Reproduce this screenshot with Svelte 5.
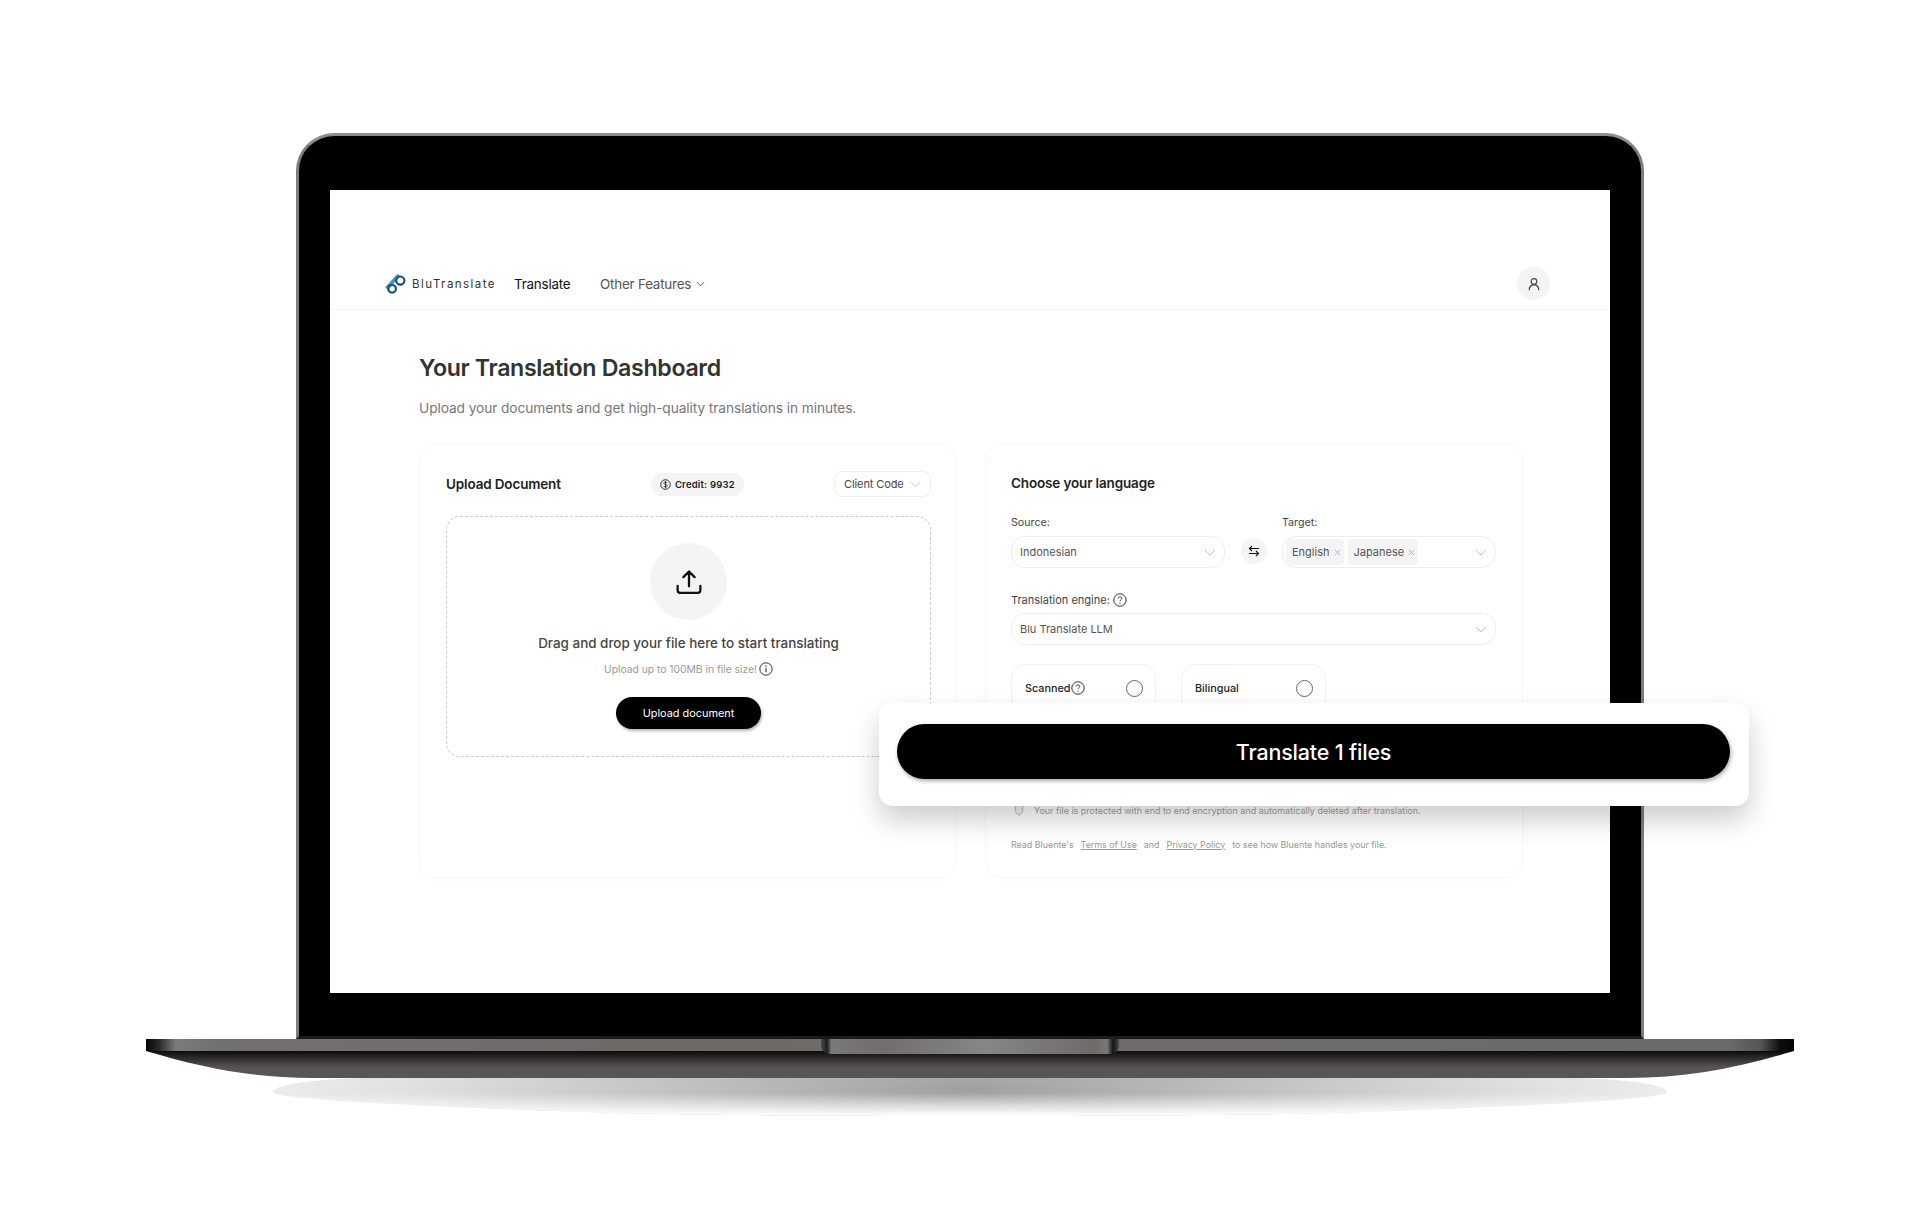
<script>
  const tags = ['English', 'Japanese'];
</script>

<div class="page">
  <div class="laptop">
    <div class="bezel">
      <div class="screen">
        <header class="nav">
          <svg class="logo" viewBox="0 0 21 20" width="22" height="20" aria-hidden="true">
            <path d="M1 14.500 L13.500 1" stroke="#3f93c6" stroke-width="3.800" fill="none"/>
            <circle cx="14.800" cy="6.600" r="4.100" fill="none" stroke="#1d4f7c" stroke-width="2.200"/>
            <circle cx="6.600" cy="14.800" r="3.800" fill="none" stroke="#1d4f7c" stroke-width="2.200"/>
          </svg>
          <span class="brand">BluTranslate</span>
          <span class="navlink active">Translate</span>
          <span class="navlink">Other Features</span>
          <svg class="navchev" viewBox="0 0 10 6" width="9" height="6" aria-hidden="true"><path d="M1 1l4 4 4-4" fill="none" stroke="#555" stroke-width="1"/></svg>
          <div class="avatar">
            <svg viewBox="0 0 16 16" width="14" height="14" aria-hidden="true"><circle cx="8" cy="5" r="3.200" fill="none" stroke="#444" stroke-width="1.300"/><path d="M2.500 15c0-3.600 2-6 5.500-6s5.500 2.400 5.500 6" fill="none" stroke="#444" stroke-width="1.300"/></svg>
          </div>
        </header>

        <main class="main">
          <h1>Your Translation Dashboard</h1>
          <p class="sub">Upload your documents and get high-quality translations in minutes.</p>

          <div class="cards">
            <section class="card left">
              <div class="head">
                <h2>Upload Document</h2>
                <span class="credit">
                  <svg viewBox="0 0 12 12" width="11" height="11" aria-hidden="true"><circle cx="6" cy="6" r="5.200" fill="none" stroke="#222" stroke-width="1"/><path d="M7.800 4.300C7.500 3.500 6.800 3.200 6 3.200c-1 0-1.800.5-1.800 1.400 0 1.900 3.700.9 3.700 2.800 0 .9-.9 1.400-1.900 1.400-.9 0-1.700-.4-2-1.200M6 2v8" fill="none" stroke="#222" stroke-width=".9"/></svg>
                  Credit: 9932
                </span>
                <span class="client">Client Code
                  <svg viewBox="0 0 12 7" width="11" height="7" aria-hidden="true"><path d="M1 1l5 5 5-5" fill="none" stroke="#c4c4c4" stroke-width="1"/></svg>
                </span>
              </div>

              <div class="drop">
                <div class="circle">
                  <svg viewBox="0 0 24 24" width="26" height="26" aria-hidden="true"><path d="M12 16V2.500M6.800 7.500 12 2.300l5.200 5.200M1.500 15.500v4.200c0 1.300 1 2.300 2.300 2.300h16.400c1.300 0 2.300-1 2.300-2.300v-4.200" fill="none" stroke="#111" stroke-width="2.100" stroke-linecap="round" stroke-linejoin="round"/></svg>
                </div>
                <p class="dragline">Drag and drop your file here to start translating</p>
                <p class="limit">Upload up to 100MB in file size!
                  <svg viewBox="0 0 14 14" width="14" height="14" aria-hidden="true"><circle cx="7" cy="7" r="6.200" fill="none" stroke="#333" stroke-width="1"/><path d="M7 6.200v4M7 3.600v1.200" stroke="#333" stroke-width="1.200" fill="none"/></svg>
                </p>
                <button class="upload" type="button">Upload document</button>
              </div>
            </section>

            <section class="card right">
              <h2 class="lang">Choose your language</h2>
              <div class="langrow">
                <div class="field">
                  <span class="label">Source:</span>
                  <div class="select">
                    <span>Indonesian</span>
                    <svg viewBox="0 0 12 7" width="12" height="7" aria-hidden="true"><path d="M1 1l5 5 5-5" fill="none" stroke="#c4c4c4" stroke-width="1"/></svg>
                  </div>
                </div>
                <div class="swap">
                  <svg viewBox="0 0 12 12" width="12" height="12" aria-hidden="true"><path d="M11 3.500H1.500M4 1 1.500 3.500 4 6M1 8.500h9.500M8 6l2.500 2.500L8 11" fill="none" stroke="#111" stroke-width="1.100"/></svg>
                </div>
                <div class="field">
                  <span class="label">Target:</span>
                  <div class="select multi">
                    {#each tags as t}
                      <span class="tag">{t}<svg viewBox="0 0 8 8" width="7" height="7" aria-hidden="true"><path d="M1 1l6 6M7 1 1 7" stroke="#aaa" stroke-width="1"/></svg></span>
                    {/each}
                    <svg class="end" viewBox="0 0 12 7" width="12" height="7" aria-hidden="true"><path d="M1 1l5 5 5-5" fill="none" stroke="#c4c4c4" stroke-width="1"/></svg>
                  </div>
                </div>
              </div>

              <div class="engine-label">Translation engine:
                <svg viewBox="0 0 14 14" width="14" height="14" aria-hidden="true"><circle cx="7" cy="7" r="6.200" fill="none" stroke="#333" stroke-width="1"/><path d="M5.200 5.500c0-1 .8-1.700 1.800-1.700s1.800.7 1.800 1.600c0 1.300-1.800 1.400-1.800 2.700M7 9.600v1.200" fill="none" stroke="#333" stroke-width="1"/></svg>
              </div>
              <div class="select wide">
                <span>Blu Translate LLM</span>
                <svg viewBox="0 0 12 7" width="12" height="7" aria-hidden="true"><path d="M1 1l5 5 5-5" fill="none" stroke="#c4c4c4" stroke-width="1"/></svg>
              </div>

              <div class="toggles">
                <div class="toggle">
                  <span class="tlabel">Scanned
                    <svg viewBox="0 0 14 14" width="14" height="14" aria-hidden="true"><circle cx="7" cy="7" r="6.200" fill="none" stroke="#333" stroke-width="1"/><path d="M5.200 5.500c0-1 .8-1.700 1.800-1.700s1.800.7 1.800 1.600c0 1.300-1.800 1.400-1.800 2.700M7 9.600v1.200" fill="none" stroke="#333" stroke-width="1"/></svg>
                  </span>
                  <span class="radio"></span>
                </div>
                <div class="toggle">
                  <span class="tlabel">Bilingual</span>
                  <span class="radio"></span>
                </div>
              </div>

              <div class="secure">
                <svg viewBox="0 0 12 14" width="10" height="12" aria-hidden="true"><path d="M6 1 10.500 2.500v4.300c0 3-2 4.900-4.500 6.200-2.500-1.300-4.500-3.200-4.500-6.200V2.500z" fill="#f2f2f2" stroke="#aaa" stroke-width="1"/></svg>
                <span>Your file is protected with end to end encryption and automatically deleted after translation.</span>
              </div>
              <div class="legal">
                <span>Read Bluente's</span><u>Terms of Use</u><span>and</span><u>Privacy Policy</u><span>to see how Bluente handles your file.</span>
              </div>
            </section>
          </div>
        </main>

        <div class="float">
          <button class="translate" type="button">Translate 1 files</button>
        </div>
      </div>
    </div>

    <div class="strip"><div class="notch"></div></div>
    <svg class="base" viewBox="0 0 1648 27" width="1648" height="27" aria-hidden="true">
      <defs>
        <linearGradient id="baseg" x1="0" y1="0" x2="0" y2="1">
          <stop offset="0" stop-color="#0b0b0b"/>
          <stop offset=".25" stop-color="#2c2a2a"/>
          <stop offset=".6" stop-color="#575352"/>
          <stop offset="1" stop-color="#5a5654"/>
        </linearGradient>
      </defs>
      <path d="M0 0H1648C1591 17 1541 27 1481 27H167C107 27 57 17 0 0Z" fill="url(#baseg)"/>
    </svg>
    <svg class="shadow" viewBox="0 0 1394 39" width="1394" height="39" aria-hidden="true">
      <defs>
        <radialGradient id="shg" gradientUnits="userSpaceOnUse" cx="697" cy="12" r="697" gradientTransform="translate(0 10) scale(1 .15)">
          <stop offset="0" stop-color="#a0a0a0"/>
          <stop offset=".4" stop-color="#c0c0c0"/>
          <stop offset=".8" stop-color="#e0e0e0"/>
          <stop offset="1" stop-color="#ececec"/>
        </radialGradient>
        <linearGradient id="shf" x1="0" y1="0" x2="0" y2="1">
          <stop offset="0" stop-color="#fff" stop-opacity="0"/>
          <stop offset=".4" stop-color="#fff" stop-opacity="0"/>
          <stop offset="1" stop-color="#fff" stop-opacity="1"/>
        </linearGradient>
      </defs>
      <path d="M0 14C0 8 30 2 85 0H1309C1364 2 1394 8 1394 14C1394 20 1300 27 1060 35C900 39 500 39 340 35C100 27 0 20 0 14Z" fill="url(#shg)"/>
      <path d="M0 14C0 8 30 2 85 0H1309C1364 2 1394 8 1394 14C1394 20 1300 27 1060 35C900 39 500 39 340 35C100 27 0 20 0 14Z" fill="url(#shf)"/>
    </svg>
  </div>
</div>

<style>
  :global(*) { box-sizing: border-box; }
  :global(body) { margin: 0; background: #fff; font-family: Inter, "Liberation Sans", sans-serif; }

  .page { height: 1222px; padding: 133px 0 0 146px; overflow: hidden; }
  .laptop { width: 1648px; display: flex; flex-direction: column; }

  .bezel {
    width: 1348px;
    height: 906px;
    margin-left: 150px;
    padding: 54px 31px 43px 31px;
    background: #000;
    border: 3px solid #7c7c7c;
    border-top-color: #8e8e8e;
    border-bottom-color: #1b1b1b;
    border-radius: 38px 38px 0 0;
  }
  .screen { width: 1280px; height: 803px; background: #fff; position: relative; }

  .nav {
    height: 120px;
    padding: 77px 60px 9px 55px;
    display: flex;
    align-items: center;
    border-bottom: 1px solid #f6f6f6;
  }
  .logo { flex: none; }
  .brand { margin-left: 5px; font-size: 11.500px; letter-spacing: 1.450px; color: #333; width: 102px; }
  .navlink { font-size: 13.400px; color: #555; letter-spacing: -.2px; }
  .navlink.active { color: #111; width: 86px; }
  .navchev { margin-left: 5px; }
  .avatar {
    margin-left: auto;
    width: 33px;
    height: 33px;
    border-radius: 50%;
    background: #f4f4f5;
    display: flex;
    align-items: center;
    justify-content: center;
  }

  .main { padding: 43px 87px 0 89px; }
  h1 { margin: 0; font-size: 23.200px; line-height: 30px; font-weight: 600; color: #333; letter-spacing: -.35px; }
  .sub { margin: 15px 0 26px; font-size: 13.750px; line-height: 20px; color: #777; letter-spacing: -.1px; }

  .cards { display: flex; justify-content: space-between; }
  .card {
    height: 434px;
    border: 1px solid #f8f8f8;
    border-radius: 16px;
    background: #fff;
    box-shadow: 0 2px 8px rgba(0, 0, 0, .012);
  }
  .left { width: 537px; padding: 26px 24px 0 26px; }
  .right { width: 538px; padding: 29px 26px 0 25px; }

  .head { display: flex; align-items: center; justify-content: space-between; height: 26px; }
  h2 { margin: 0; font-size: 13.500px; line-height: 18px; font-weight: 600; color: #222; letter-spacing: -.15px; }
  .credit {
    display: flex;
    align-items: center;
    gap: 4px;
    width: 93px;
    height: 23px;
    padding-left: 9px;
    border-radius: 12px;
    background: #f4f4f6;
    font-size: 9.500px;
    font-weight: 600;
    color: #222;
    letter-spacing: .2px;
    white-space: nowrap;
  }
  .client {
    display: flex;
    align-items: center;
    justify-content: space-between;
    width: 97px;
    height: 26px;
    padding: 0 9px;
    border: 1px solid #eee;
    border-radius: 8px;
    font-size: 11px;
    color: #444;
    letter-spacing: -.1px;
    white-space: nowrap;
  }

  .drop {
    margin-top: 19px;
    height: 241px;
    padding-top: 26px;
    border: 1px dashed #cbcbcb;
    border-radius: 14px;
    display: flex;
    flex-direction: column;
    align-items: center;
  }
  .circle {
    width: 77px;
    height: 77px;
    border-radius: 50%;
    background: #f4f4f6;
    display: flex;
    align-items: center;
    justify-content: center;
    flex: none;
  }
  .dragline { margin: 14px 0 0; font-size: 13.450px; line-height: 18px; font-weight: 500; color: #444; white-space: nowrap; }
  .limit {
    margin: 10px 0 0;
    height: 14px;
    display: flex;
    align-items: center;
    gap: 2px;
    font-size: 10.300px;
    color: #999;
    white-space: nowrap;
  }
  .upload {
    margin-top: 21px;
    width: 145px;
    height: 32px;
    border: 0;
    border-radius: 16px;
    background: #000;
    color: #fff;
    font: 400 10.900px Inter, sans-serif;
    box-shadow: 1px 2px 3px rgba(0, 0, 0, .3);
    padding: 0;
  }

  .lang { letter-spacing: -.15px; }
  .langrow { margin-top: 24px; display: flex; justify-content: space-between; align-items: flex-end; }
  .field { width: 214px; display: flex; flex-direction: column; gap: 6px; }
  .label { font-size: 10.700px; line-height: 14px; color: #444; }
  .select {
    height: 32px;
    padding: 0 8px;
    border: 1px solid #eeeeee;
    border-radius: 14px;
    display: flex;
    align-items: center;
    justify-content: space-between;
    font-size: 11px;
    color: #555;
  }
  .multi { padding: 0 3px; gap: 4px; justify-content: flex-start; }
  .tag {
    height: 26px;
    padding: 0 3px 0 6px;
    border-radius: 4px;
    background: #f4f4f4;
    display: flex;
    align-items: center;
    gap: 4px;
    flex: none;
  }
  .end { margin-left: auto; margin-right: 5px; }
  .swap {
    width: 26px;
    height: 26px;
    margin-bottom: 4px;
    border-radius: 50%;
    background: #f4f4f6;
    display: flex;
    align-items: center;
    justify-content: center;
  }
  .engine-label {
    margin-top: 24px;
    height: 16px;
    display: flex;
    align-items: center;
    gap: 3px;
    font-size: 11px;
    color: #444;
  }
  .wide { margin-top: 5px; }
  .toggles { margin-top: 19px; display: flex; gap: 25px; }
  .toggle {
    width: 145px;
    height: 48px;
    padding: 0 12px 0 13px;
    border: 1px solid #f2f2f2;
    border-radius: 14px;
    display: flex;
    align-items: center;
    justify-content: space-between;
  }
  .tlabel { display: flex; align-items: center; gap: 1px; font-size: 10.800px; font-weight: 500; color: #222; }
  .radio { width: 17px; height: 17px; border: 1px solid #666; border-radius: 50%; }

  .secure {
    margin-top: 91px;
    height: 14px;
    padding-left: 3px;
    display: flex;
    align-items: center;
    gap: 10px;
    font-size: 8.980px;
    color: #a0a0a0;
    white-space: nowrap;
  }
  .legal {
    margin-top: 20px;
    height: 14px;
    display: flex;
    align-items: center;
    gap: 7px;
    font-size: 8.880px;
    color: #999;
    white-space: nowrap;
  }

  .float {
    position: absolute;
    left: 549px;
    top: 513px;
    width: 870px;
    height: 103px;
    padding: 21px 19px 0 18px;
    background: #fff;
    border-radius: 14px;
    box-shadow: 0 14px 28px rgba(0, 0, 0, .2);
  }
  .translate {
    width: 833px;
    height: 55px;
    border: 0;
    border-radius: 28px;
    background: #000;
    color: #fff;
    font: 500 21.500px Inter, sans-serif;
    letter-spacing: -.2px;
    box-shadow: 1px 2px 4px rgba(0, 0, 0, .35);
    padding: 0;
  }

  .strip {
    height: 12px;
    display: flex;
    justify-content: center;
    background: linear-gradient(90deg, #050505 0, #2a2a2a .8%, #7b7b7b 1.8%, #737170 4%, #6e6a68 30%, #6f6d6b 70%, #6a6a6a 96%, #555 98%, #0a0a0a 99.2%, #050505 100%);
    position: relative;
    z-index: 1;
  }
  .notch {
    width: 298px;
    height: 15px;
    flex: none;
    border-radius: 0 0 8px 8px;
    background: linear-gradient(90deg, #4a4a4a 0, #1c1c1c 2%, #7a7a7a 3.500%, #716d6b 20%, #868684 55%, #6e6a68 92%, #7a7a7a 96%, #141414 98%, #4a4a4a 100%);
  }
  .base { display: block; flex: none; }
  .shadow { display: block; flex: none; margin-left: 127px; }
</style>
